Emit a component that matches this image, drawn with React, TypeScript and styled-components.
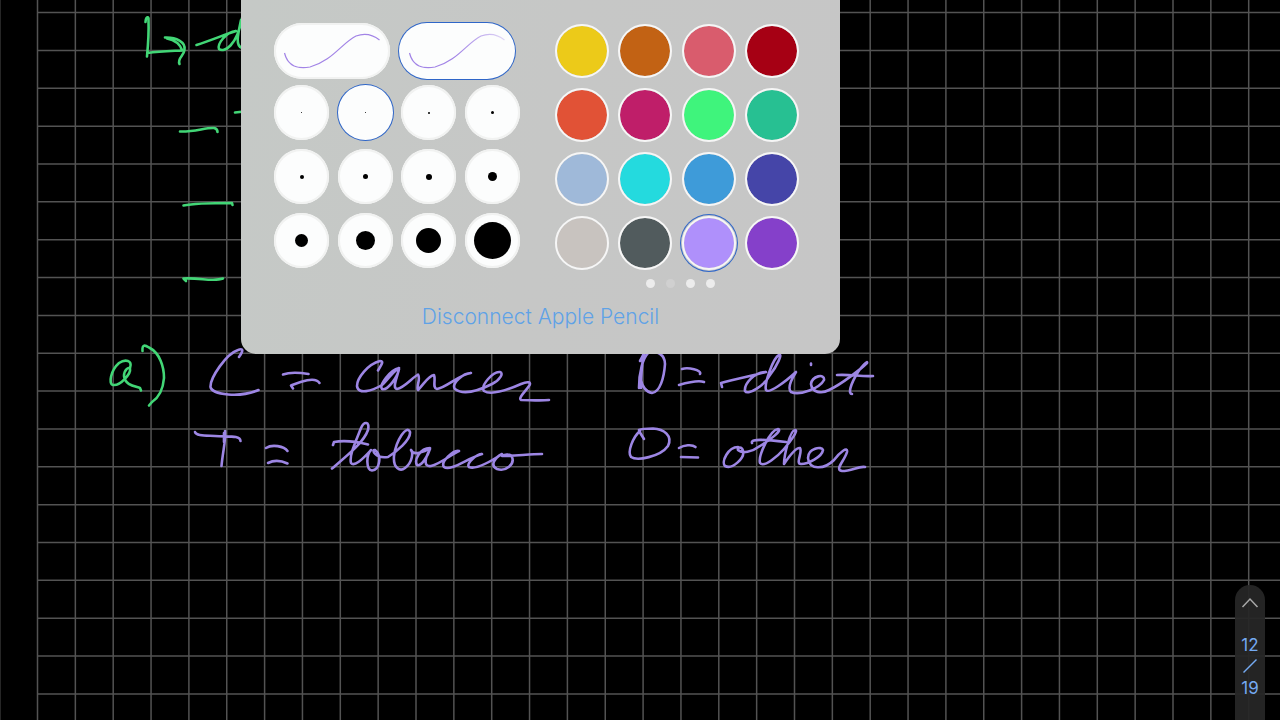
import React, { useState } from "react";
import styled, { createGlobalStyle } from "styled-components";

const GlobalStyle = createGlobalStyle`
  * { box-sizing: border-box; }
  body {
    margin: 0;
    background: #000;
    font-family: Inter, "Liberation Sans", sans-serif;
  }
`;

const Page = styled.main`
  position: relative;
  min-height: 100vh;
  overflow: hidden;
  background: #000;
`;

const Canvas = styled.svg`
  position: absolute;
  inset: 0;
  width: 100%;
  height: 100%;
`;

const Popover = styled.form`
  position: absolute;
  top: 0;
  left: 241px;
  width: 599px;
  padding: 23px 0 22px;
  border-radius: 0 0 15px 15px;
  background: linear-gradient(100deg, #c5c9c6, #c6c7c6 50%, #c6c6c6);
`;

const Columns = styled.div`
  display: flex;
  justify-content: space-between;
  padding: 0 40px 0 33px;
`;

const Group = styled.fieldset`
  width: 246px;
  margin: 0;
  padding: 0;
  border: 0;
`;

const StrokeRow = styled.div`
  display: flex;
  gap: 9px;
  margin-bottom: 6px;
`;

const ChoiceGrid = styled.div`
  display: grid;
  grid-template-columns: repeat(4, 55px);
  grid-auto-rows: 55px;
  place-items: center;
  justify-content: space-between;
  row-gap: 9px;
`;

const HiddenRadio = styled.input`
  position: absolute;
  opacity: 0;
  pointer-events: none;
`;

const Choice = styled.label<{ $wide?: boolean }>`
  display: grid;
  place-items: center;
  width: ${(p) => (p.$wide ? 116 : 55)}px;
  height: ${(p) => (p.$wide ? 56 : 55)}px;
  border-radius: 28px;
  background: #fcfdfd;
  box-shadow: inset 0 0 0 2px #f1f2f1;
  cursor: pointer;

  &:has(input:checked) {
    box-shadow: 0 0 0 1px #2f66c8;
  }
`;

const Nib = styled.span<{ $size: number }>`
  width: ${(p) => p.$size}px;
  height: ${(p) => p.$size}px;
  border-radius: 50%;
  background: #000;
`;

const Swatch = styled.input<{ $color: string }>`
  appearance: none;
  width: 54px;
  height: 54px;
  margin: 0;
  border: 2px solid #f6f6f6;
  border-radius: 50%;
  background: ${(p) => p.$color} padding-box;
  cursor: pointer;

  &:checked {
    box-shadow: 0 0 0 1px #c6c6c6, 0 0 0 2px #2f66c8;
  }
`;

const Pager = styled.div`
  display: flex;
  justify-content: center;
  gap: 11px;
  margin-top: 9px;
  padding-left: 7px;
`;

const PageDot = styled.button<{ $current?: boolean }>`
  width: 9px;
  height: 9px;
  padding: 0;
  border: 0;
  border-radius: 50%;
  background: ${(p) => (p.$current ? "#d0d0d0" : "#ececec")};
`;

const Disconnect = styled.button`
  display: block;
  margin: 14px auto 0;
  padding: 0;
  border: 0;
  background: none;
  color: #5fa2e6;
  font: 300 21px/30px Inter, "Liberation Sans", sans-serif;
`;

const PageNav = styled.nav`
  position: absolute;
  top: 585px;
  right: 15px;
  bottom: 0;
  display: flex;
  flex-direction: column;
  align-items: center;
  width: 30px;
  padding-top: 11px;
  border-radius: 15px 15px 0 0;
  background: rgba(38, 38, 38, 0.94);
  color: #74aaf2;
  font-size: 17px;
  line-height: 20px;
`;

const UpButton = styled.button`
  display: block;
  height: 14px;
  margin-bottom: 25px;
  padding: 0;
  border: 0;
  background: none;
`;

const Slash = styled.svg`
  display: block;
  margin: 3px 0 4px;
`;

const GRID_STEP = 37.85;
const gridLines = Array.from({ length: 80 }, (_, i) => i * GRID_STEP);

const nibSizes = [1, 1, 2, 3, 4, 5, 6, 9, 13, 19, 25, 37];

const colors: [string, string][] = [
  ["Yellow", "#ecca19"],
  ["Orange", "#c26214"],
  ["Rose", "#d95c6d"],
  ["Crimson", "#a60014"],
  ["Vermilion", "#e15236"],
  ["Magenta", "#bf1e69"],
  ["Bright green", "#3ff47c"],
  ["Teal", "#27c092"],
  ["Pale blue", "#9fb9d9"],
  ["Cyan", "#24dade"],
  ["Blue", "#3e9bd9"],
  ["Indigo", "#4545a8"],
  ["Warm grey", "#c8c3bf"],
  ["Slate", "#515b5d"],
  ["Lavender", "#af90fb"],
  ["Purple", "#8540ca"],
];

const greenInk = [
  // bent arrow
  "M145.5 22C146 16 149 16 148.500 20C149 34 148 46 147 56.500M147.500 53C160 51 172 51 182 50.500",
  "M165 37.500C176 37 186 42 184.500 50C184 56 177 58 179.500 64M167 38.500C174 40 180 44 182 50",
  // dash running into the covered letter
  "M196.500 45C212 40 226 34 236 31C226 32 217 44 219 49C224 53 237 46 242 18M241 20C238 34 235 46 242 48",
  "M235 112.500L244 111.500",
  // list dashes
  "M180 131.500C195 132 205 127.500 214 128C217 128.500 217.500 130 217.500 132",
  "M183.500 205.500C195 203 215 203 232 203L232.500 205",
  "M186 281L183.500 278.500C200 277.500 213 282 223 278.500",
  // a)
  "M130 368C133 360 125 359 119 363C111 370 108 384 113 385C121 386 131 373 130 369C129 366 124 370 124 376C125 385 134 386 140 388L141 390.500",
  "M142.500 351C142 344 145 345 149 347.500C160 353 164 367 164 378C163 390 158 398 152 402L149 405.500",
];

const purpleInk = [
  // C =
  "M239 357C244 350 243 348 238 350C226 354 210 378 210.500 387C212 395 240 398 258.500 390",
  "M283 374.500C290 372 302 373 308.500 374M293 388.500L291 385.500C300 382 315 376 319.500 383",
  // cancer
  "M378 370.500C382 364 384 361 380 361C368 364 357 378 357 386C358 395 372 391 382 385C388 380 392 372 399 368C390 370 379 385 382 389C388 391 398 376 399 369C397 378 392 388 397 389C404 388 412 378 418 374.500C421 379 416 386 418 390C424 384 428 376 434 375C436 380 432 388 437 389C446 388 460 374 471 373C463 373 451 384 455 389C464 396 480 390 492 384C500 380 504 373 500 372C493 371 480 386 484 391C492 396 512 388 521 384C528 381 532 382 529 386C525 392 518 398 521 400C530 400 540 401 549 400",
  // D =
  "M640 361C645 352 645 350 644 353C641 368 641 380 641 388M639 388C639 372 643 358 648 353C656 350 665 354 665 364C664 378 660 392 652 393C646 392 642 386 641 380",
  "M682 369C688 367 702 370 700 374M679 385C686 383 698 380 704 382",
  // diet
  "M722 387L721 383C735 379 755 375 766 372C754 372 744 384 745 391C748 396 765 385 770 375C777 366 783 353 779 355C773 358 764 384 766 390C769 394 785 382 796 372C791 380 787 388 791 392C800 396 820 388 824 380C825 373 812 376 811 384C812 393 822 394 829 390C842 384 862 368 867 363C868 360 862 366 858 372C850 385 848 394 852 394",
  "M837 375C850 374 862 377 873 376M811 363.500L811 365",
  // T =
  "M195 432C196 436 205 435.500 215 436C228 437 240 435 240.500 441M225 431C226 440 223 450 221.500 466M224 433L224 442",
  "M266 448C272 444 284 446 287.500 451M268 463C274 460 282 461 287.500 463.500",
  // tobacco
  "M333 445L334 442C345 440 358 442 368 444.500M332 468.500C348 455 364 442 368 430C370 421 364 421 361 428C355 443 349 456 351 463C354 467 362 460 371 450C366 455 366 470 372 470.500C380 470 382 455 375 450C371 449 375 459 388 457C396 452 411 440 410 432C407 424 396 440 394 456C393 468 400 472 405 468C413 462 413 452 411 450C413 456 425 452 430 448C420 448 414 460 417 465C421 467 428 456 430 449C424 460 424 467 431 466C440 464 452 454 459 451C454 449 440 462 444 467C450 472 468 458 482 454C476 454 466 464 469 467C476 470 490 462 502 454C494 458 490 466 497 469C506 472 515 464 512 457C510 453 504 455 502 456C515 456 530 454 542 454",
  // O =
  "M644 439L639 431M640 431C633 437 627 452 631 457C637 461 660 457 668 446C673 436 664 429 653 428.500C646 428.500 641 429 639 430",
  "M679 448C684 445 692 444 695.500 447M681 457L698 457.500",
  // other
  "M738 447C728 447 721 462 725 466C732 470 745 458 743 451C742 446 737 447 738 450C742 454 752 452 760 446C770 440 783 430 778 429C770 430 758 456 760 463C764 468 778 456 784 449C790 442 799 430 795 430C790 430 784 456 784 464C788 458 796 447 800 448C803 452 795 464 801 464C808 464 822 457 823 450C822 446 808 448 808 458C809 470 824 470 834 460C840 452 848 446 847 452C845 460 834 470 842 471C852 471 858 466 865 467",
  "M752 443C750 438 768 440 786 442",
];

function Notebook() {
  return (
    <Canvas role="img" aria-label="Handwritten notes: a) C = cancer, D = diet, T = tobacco, O = other">
      <g stroke="#535353" strokeWidth="1.500">
        {gridLines.map((d) => (
          <line key={d} x1={37.5 + d} x2={37.5 + d} y1="0" y2="100%" />
        ))}
        {gridLines.map((d) => (
          <line key={d} x1="37" x2="100%" y1={12.6 + d} y2={12.6 + d} />
        ))}
        <line x1="0" x2="0" y1="0" y2="100%" stroke="#333" />
      </g>
      <g fill="none" strokeWidth="2.600" strokeLinecap="round" strokeLinejoin="round">
        <g stroke="#42d676">
          {greenInk.map((d) => (
            <path key={d} d={d} />
          ))}
        </g>
        <g stroke="#9d86e4">
          {purpleInk.map((d) => (
            <path key={d} d={d} />
          ))}
        </g>
      </g>
    </Canvas>
  );
}

function StrokePreview({ tapered }: { tapered?: boolean }) {
  const d = "M10.500 30C14 44 24 46 36 44C58 38 68 20 82 13C90 10 98 11 105.500 17";
  return (
    <svg width="116" height="56" viewBox="0 0 116 56" fill="none" aria-hidden="true">
      <defs>
        <linearGradient id="taper" x1="0" x2="1" y1="0" y2="0">
          <stop offset="0.500" stopColor="#a284e6" />
          <stop offset="1" stopColor="#a284e6" stopOpacity="0.300" />
        </linearGradient>
      </defs>
      <path d={d} stroke={tapered ? "url(#taper)" : "#a284e6"} strokeWidth="1.200" />
    </svg>
  );
}

export default function App() {
  const [stroke, setStroke] = useState(1);
  const [nib, setNib] = useState(1);
  const [color, setColor] = useState("Lavender");
  const [palettePage, setPalettePage] = useState(1);

  return (
    <>
      <GlobalStyle />
      <Page>
        <Notebook />
        <Popover onSubmit={(e) => e.preventDefault()}>
          <Columns>
            <Group aria-label="Pen">
              <StrokeRow>
                {["Uniform stroke", "Tapered stroke"].map((name, i) => (
                  <Choice key={name} $wide>
                    <HiddenRadio
                      type="radio"
                      name="stroke"
                      aria-label={name}
                      checked={stroke === i}
                      onChange={() => setStroke(i)}
                    />
                    <StrokePreview tapered={i === 1} />
                  </Choice>
                ))}
              </StrokeRow>
              <ChoiceGrid>
                {nibSizes.map((size, i) => (
                  <Choice key={i}>
                    <HiddenRadio
                      type="radio"
                      name="nib"
                      aria-label={`Nib size ${i + 1}`}
                      checked={nib === i}
                      onChange={() => setNib(i)}
                    />
                    <Nib $size={size} />
                  </Choice>
                ))}
              </ChoiceGrid>
            </Group>
            <Group aria-label="Colour">
              <ChoiceGrid>
                {colors.map(([name, value]) => (
                  <Swatch
                    key={name}
                    type="radio"
                    name="color"
                    aria-label={name}
                    $color={value}
                    checked={color === name}
                    onChange={() => setColor(name)}
                  />
                ))}
              </ChoiceGrid>
              <Pager>
                {[0, 1, 2, 3].map((i) => (
                  <PageDot
                    key={i}
                    type="button"
                    aria-label={`Palette ${i + 1}`}
                    $current={palettePage === i}
                    onClick={() => setPalettePage(i)}
                  />
                ))}
              </Pager>
            </Group>
          </Columns>
          <Disconnect type="button">Disconnect Apple Pencil</Disconnect>
        </Popover>
        <PageNav aria-label="Pages">
          <UpButton type="button" aria-label="Previous page">
            <svg width="18" height="14" viewBox="0 0 18 14" fill="none" stroke="#a8a8a8" strokeWidth="1.500">
              <path d="M1.500 11L9 3L16.500 11" />
            </svg>
          </UpButton>
          <span>12</span>
          <Slash width="16" height="16" viewBox="0 0 16 16" stroke="#74aaf2" strokeWidth="1.500" aria-hidden="true">
            <path d="M1.500 14.500L14.500 1.500" />
          </Slash>
          <span>19</span>
        </PageNav>
      </Page>
    </>
  );
}
